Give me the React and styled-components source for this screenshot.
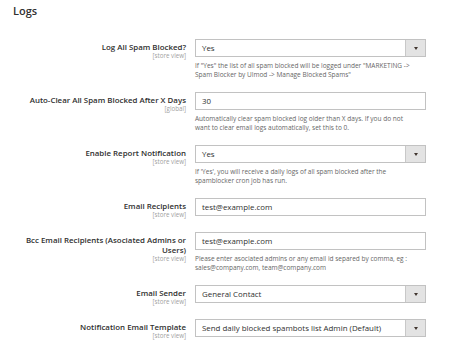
import React from "react";
import styled, { createGlobalStyle } from "styled-components";

const GlobalStyle = createGlobalStyle`
  body {
    margin: 0;
    background: #ffffff;
    font-family: "Open Sans", "Liberation Sans", sans-serif;
    color: #303030;
  }
`;

const Page = styled.div`
  width: 474px;
  height: 350px;
  overflow: hidden;
  padding: 4px 0 0 13px;
  box-sizing: border-box;
`;

const Title = styled.h2`
  margin: 0 0 21px;
  font-size: 11px;
  font-weight: 600;
  line-height: 14px;
  color: #303030;
`;

const Form = styled.div`
  padding-left: 5px;
`;

const Row = styled.div`
  display: grid;
  grid-template-columns: 168px 231px;
  column-gap: 9px;
  margin-bottom: 13px;
`;

const LabelCell = styled.div`
  text-align: right;
  padding-top: 3px;
`;

const Label = styled.div`
  font-size: 7.9px;
  font-weight: 600;
  line-height: 10px;
  color: #303030;
`;

const Scope = styled.div`
  font-size: 6.2px;
  line-height: 8px;
  color: #a0a0a0;
`;

const Field = styled.div`
  display: flex;
  align-items: center;
  height: 18px;
  border: 1px solid #c2c2c2;
  box-sizing: border-box;
  font-size: 7.9px;
  color: #303030;
  background: #fff;
`;

const Value = styled.span`
  flex: 1;
  padding-left: 6px;
  white-space: nowrap;
`;

const Arrow = styled.span`
  width: 19px;
  align-self: stretch;
  background: #e3e3e3;
  border-left: 1px solid #c8c8c8;
  display: flex;
  align-items: center;
  justify-content: center;
  &::after {
    content: "";
    border-left: 2px solid transparent;
    border-right: 2px solid transparent;
    border-top: 3px solid #41362f;
  }
`;

const Note = styled.div`
  margin-top: 4px;
  font-size: 6.5px;
  line-height: 9px;
  color: #666;
`;

const fields = [
  {
    label: "Log All Spam Blocked?",
    scope: "[store view]",
    value: "Yes",
    select: true,
    note: (
      <>
        If "Yes" the list of all spam blocked will be logged under "MARKETING -&gt;
        <br />
        Spam Blocker by Ulmod -&gt; Manage Blocked Spams"
      </>
    ),
  },
  {
    label: "Auto-Clear All Spam Blocked After X Days",
    scope: "[global]",
    value: "30",
    note: (
      <>
        Automatically clear spam blocked log older than X days. If you do not
        <br />
        want to clear email logs automatically, set this to 0.
      </>
    ),
  },
  {
    label: "Enable Report Notification",
    scope: "[store view]",
    value: "Yes",
    select: true,
    note: (
      <>
        If 'Yes', you will receive a daily logs of all spam blocked after the
        <br />
        spamblocker cron job has run.
      </>
    ),
  },
  {
    label: "Email Recipients",
    scope: "[store view]",
    value: "test@example.com",
  },
  {
    label: (
      <>
        Bcc Email Recipients (Asociated Admins or
        <br />
        Users)
      </>
    ),
    key: "bcc",
    scope: "[store view]",
    value: "test@example.com",
    note: (
      <>
        Please enter asociated admins or any email id separed by comma, eg :
        <br />
        sales@company.com, team@company.com
      </>
    ),
  },
  {
    label: "Email Sender",
    scope: "[store view]",
    value: "General Contact",
    select: true,
  },
  {
    label: "Notification Email Template",
    scope: "[store view]",
    value: "Send daily blocked spambots list Admin (Default)",
    select: true,
  },
];

export default function App() {
  return (
    <Page>
      <GlobalStyle />
      <Title>Logs</Title>
      <Form>
        {fields.map((f) => (
          <Row key={f.key || f.label}>
            <LabelCell>
              <Label>{f.label}</Label>
              <Scope>{f.scope}</Scope>
            </LabelCell>
            <div>
              <Field>
                <Value>{f.value}</Value>
                {f.select && <Arrow />}
              </Field>
              {f.note && <Note>{f.note}</Note>}
            </div>
          </Row>
        ))}
      </Form>
    </Page>
  );
}
